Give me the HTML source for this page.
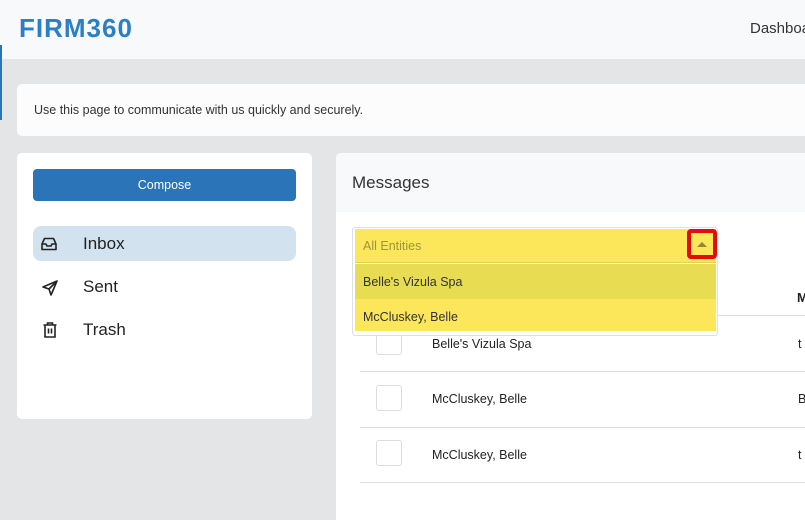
<!DOCTYPE html>
<html style="overflow:hidden;width:805px;height:520px"><head><meta charset="utf-8"><style>
*{margin:0;padding:0;box-sizing:border-box}
body{width:805px;height:520px;overflow:hidden;background:#e4e5e7;font-family:"Liberation Sans",sans-serif;position:relative;color:#222}
.a{position:absolute}
</style></head><body>
<div class="a" style="left:0;top:0;width:805px;height:59px;background:#f8f9fb"></div>
<div class="a" style="left:19px;top:13px;font-size:26px;font-weight:bold;color:#2c7fc4;letter-spacing:1px">FIRM360</div>
<div class="a" style="left:750px;top:20px;font-size:15px;color:#333">Dashboard</div>
<div class="a" style="left:0;top:45px;width:2px;height:75px;background:#2b74b8"></div>
<div class="a" style="left:17px;top:84px;width:800px;height:52px;background:#fcfcfd;border-radius:5px"></div>
<div class="a" style="left:34px;top:103px;font-size:12.5px;color:#333">Use this page to communicate with us quickly and securely.</div>

<div class="a" style="left:17px;top:153px;width:295px;height:266px;background:#fff;border-radius:5px"></div>
<div class="a" style="left:33px;top:169px;width:263px;height:32px;background:#2b74b8;border-radius:4px;color:#fff;font-size:12.5px;text-align:center;line-height:32px">Compose</div>
<div class="a" style="left:33px;top:226px;width:263px;height:35px;background:#d3e2ef;border-radius:8px"></div>
<svg class="a" style="left:40px;top:235px" width="18" height="18" viewBox="0 0 18 18" fill="none" stroke="#222" stroke-width="1.6" stroke-linejoin="round"><path d="M2 9 L4.5 3.5 H13.5 L16 9 V14.5 H2 Z M2 9 H6 L7 11 H11 L12 9 H16"/></svg>
<div class="a" style="left:83px;top:234px;font-size:17px">Inbox</div>
<svg class="a" style="left:41px;top:279px" width="18" height="18" viewBox="0 0 18 18" fill="none" stroke="#222" stroke-width="1.6" stroke-linejoin="round"><path d="M16 2 L2 8 L8 10 L10 16 Z M16 2 L8 10"/></svg>
<div class="a" style="left:83px;top:277px;font-size:17px">Sent</div>
<svg class="a" style="left:41px;top:321px" width="18" height="18" viewBox="0 0 18 18" fill="none" stroke="#222" stroke-width="1.6"><path d="M2.5 4 H15.5 M6.5 4 V2 H11.5 V4 M4 4 V16 H14 V4 M7.5 7.5 V12.5 M10.5 7.5 V12.5"/></svg>
<div class="a" style="left:83px;top:320px;font-size:17px">Trash</div>

<div class="a" style="left:336px;top:153px;width:469px;height:367px;background:#fff;border-radius:5px 0 0 0;overflow:hidden">
<div style="height:59px;background:#f8f9fb"></div></div>
<div class="a" style="left:352px;top:173px;font-size:17px;color:#333">Messages</div>
<div class="a" style="left:797px;top:290px;font-size:13px;font-weight:bold">M</div>
<div class="a" style="left:360px;top:315px;width:445px;height:1px;background:#dedfe1"></div>
<div class="a" style="left:360px;top:371px;width:445px;height:1px;background:#dedfe1"></div>
<div class="a" style="left:360px;top:427px;width:445px;height:1px;background:#dedfe1"></div>
<div class="a" style="left:360px;top:482px;width:445px;height:1px;background:#dedfe1"></div>
<div class="a" style="left:376px;top:329px;width:26px;height:26px;border:1px solid #dcdde0;border-radius:3px"></div>
<div class="a" style="left:376px;top:385px;width:26px;height:26px;border:1px solid #dcdde0;border-radius:3px"></div>
<div class="a" style="left:376px;top:440px;width:26px;height:26px;border:1px solid #dcdde0;border-radius:3px"></div>
<div class="a" style="left:432px;top:337px;font-size:12.5px">Belle's Vizula Spa</div>
<div class="a" style="left:432px;top:392px;font-size:12.5px">McCluskey, Belle</div>
<div class="a" style="left:432px;top:448px;font-size:12.5px">McCluskey, Belle</div>
<div class="a" style="left:798px;top:337px;font-size:12.5px">t</div>
<div class="a" style="left:798px;top:392px;font-size:12.5px">B</div>
<div class="a" style="left:798px;top:448px;font-size:12.5px">t</div>

<div class="a" style="left:352px;top:227px;width:366px;height:109px;border:1px solid #dfe0e2;border-radius:3px;background:#fff"></div>
<div class="a" style="left:355px;top:229px;width:361px;height:34px;background:#fce75a;border-bottom:1px solid #e3d050"></div>
<div class="a" style="left:363px;top:239px;font-size:12.5px;color:#9c9440">All Entities</div>
<div class="a" style="left:687px;top:229px;width:30px;height:30px;border:4px solid #e20c0c;border-radius:4px"></div>
<div class="a" style="left:697px;top:242px;width:0;height:0;border-left:5px solid transparent;border-right:5px solid transparent;border-bottom:5px solid #8f8a3a"></div>
<div class="a" style="left:355px;top:264px;width:361px;height:35px;background:#e8dd52"></div>
<div class="a" style="left:355px;top:299px;width:361px;height:32px;background:#fce75a"></div>
<div class="a" style="left:363px;top:275px;font-size:12.5px;color:#333">Belle's Vizula Spa</div>
<div class="a" style="left:363px;top:310px;font-size:12.5px;color:#333">McCluskey, Belle</div>
</body></html>
